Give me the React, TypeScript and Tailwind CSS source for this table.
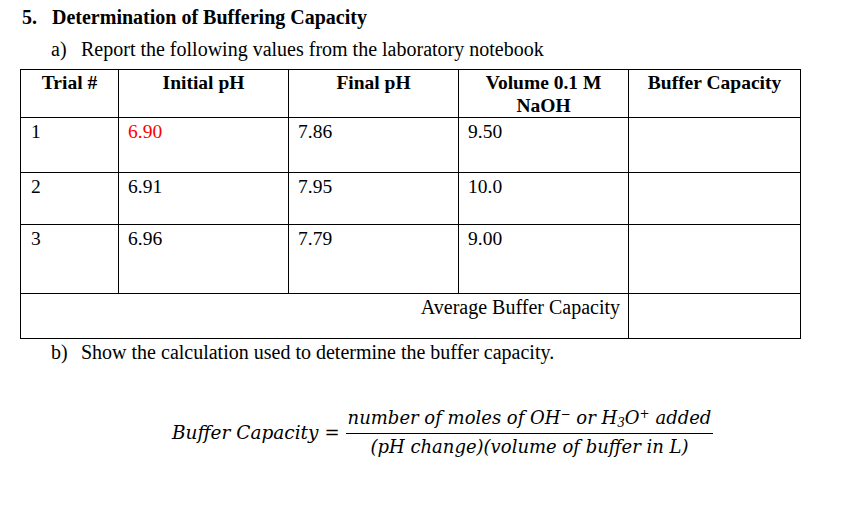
import React from "react";

const serif = { fontFamily: '"Liberation Serif", "Times New Roman", serif' };

export default function App() {
  const rows = [
    { t: "1", i: "6.90", f: "7.86", v: "9.50", h: "h-[55px]", red: true },
    { t: "2", i: "6.91", f: "7.95", v: "10.0", h: "h-[52px]", red: false },
    { t: "3", i: "6.96", f: "7.79", v: "9.00", h: "h-[69px]", red: false },
  ];
  return (
    <div className="w-[855px] h-[516px] bg-white text-black overflow-hidden" style={serif}>
      <div className="pt-[5px] pl-[22px] flex text-[20px] font-bold leading-[24px]">
        <span className="w-[30px]">5.</span>
        <span>Determination of Buffering Capacity</span>
      </div>
      <div className="pt-[8px] pl-[51px] flex text-[20px] leading-[24px]">
        <span className="w-[30px]">a)</span>
        <span>Report the following values from the laboratory notebook</span>
      </div>
      <table className="ml-[20px] mt-[8px] w-[780px] table-fixed border-collapse text-[19.5px] leading-[23px]">
        <colgroup>
          <col className="w-[98px]" />
          <col className="w-[170px]" />
          <col className="w-[170px]" />
          <col className="w-[170px]" />
          <col className="w-[172px]" />
        </colgroup>
        <tbody>
          <tr className="h-[47px]">
            {["Trial #", "Initial pH", "Final pH"].map((x) => (
              <th key={x} className="border border-black align-top text-center font-bold pt-[1px]">
                {x}
              </th>
            ))}
            <th className="border border-black align-top text-center font-bold pt-[1px]">
              Volume 0.1 M
              <br />
              NaOH
            </th>
            <th className="border border-black align-top text-center font-bold pt-[1px]">Buffer Capacity</th>
          </tr>
          {rows.map((r) => (
            <tr key={r.t} className={r.h}>
              <td className="border border-black align-top pl-[10px] pt-[2px]">{r.t}</td>
              <td className={"border border-black align-top pl-[9px] pt-[2px] " + (r.red ? "text-[#ff0000]" : "")}>{r.i}</td>
              <td className="border border-black align-top pl-[9px] pt-[2px]">{r.f}</td>
              <td className="border border-black align-top pl-[9px] pt-[2px]">{r.v}</td>
              <td className="border border-black"></td>
            </tr>
          ))}
          <tr className="h-[45px]">
            <td colSpan={4} className="border border-black align-top text-right pr-[8px] pt-[2px] text-[20px]">
              Average Buffer Capacity
            </td>
            <td className="border border-black"></td>
          </tr>
        </tbody>
      </table>
      <div className="pt-[1px] pl-[51px] flex text-[20px] leading-[24px]">
        <span className="w-[30px]">b)</span>
        <span>Show the calculation used to determine the buffer capacity.</span>
      </div>
      <div className="mt-[42px] ml-[172px] flex items-center italic" style={{ fontFamily: '"DejaVu Serif", "Liberation Serif", serif' }}>
        <span className="text-[18.5px] mt-[1px]">Buffer Capacity</span>
        <span className="not-italic ml-[6px] mr-[6px] text-[18px]">=</span>
        <div className="flex flex-col items-center text-[18px] leading-[24px]">
          <span className="px-[2px]">
            number of moles of OH
            <sup className="not-italic text-[12px]">−</sup> or H<sub className="text-[12px]">3</sub>O
            <sup className="text-[12px]">+</sup> added
          </span>
          <div className="h-px bg-black self-stretch mt-[3px] mb-[1px]" />
          <span>(pH change)(volume of buffer in L)</span>
        </div>
      </div>
    </div>
  );
}
